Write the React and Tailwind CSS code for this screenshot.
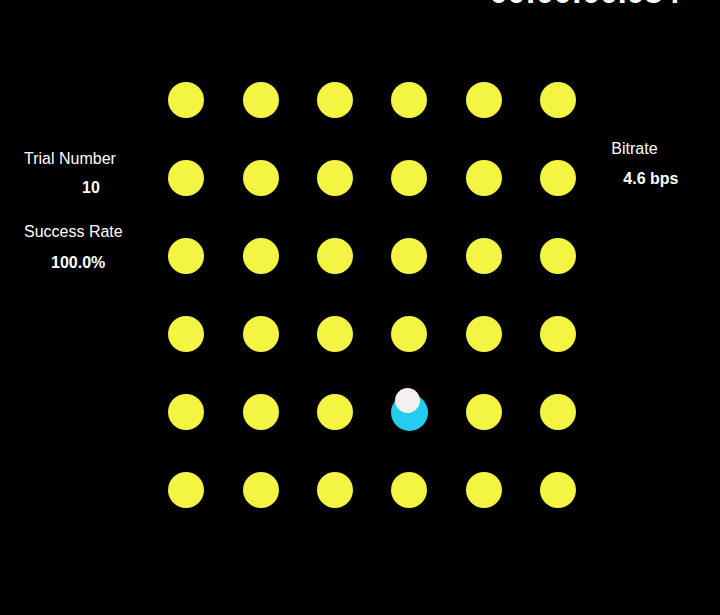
import React from "react";

const ROWS = 6;
const COLS = 6;
const TARGET = { row: 4, col: 3 };

const Dot = ({ active }) => {
  if (active) {
    return (
      <div className="relative flex items-center justify-center">
        <div className="w-[37px] h-[37px] rounded-full bg-[#22cdf0]" />
        <div className="absolute left-[23px] top-[15px] w-[25px] h-[25px] rounded-full bg-[#f5f0f0]" />
      </div>
    );
  }
  return (
    <div className="flex items-center justify-center">
      <div className="w-[36px] h-[36px] rounded-full bg-[#f4f443]" />
    </div>
  );
};

const App = () => {
  const cells = [];
  for (let r = 0; r < ROWS; r++) {
    for (let c = 0; c < COLS; c++) {
      cells.push(
        <Dot key={`${r}-${c}`} active={r === TARGET.row && c === TARGET.col} />
      );
    }
  }

  return (
    <div
      className="w-[720px] h-[615px] bg-black text-white overflow-hidden"
      style={{ fontFamily: '"Liberation Sans", Arial, sans-serif' }}
    >
      <div className="h-0 flex justify-end pr-[40px]">
        <div className="-mt-[24px] text-[32px] leading-[32px] font-bold">
          00:00:00.084
        </div>
      </div>

      <div className="flex">
        <div className="w-[149px] pt-[150px] pl-[24px] text-[16px] leading-[18px]">
          <div>Trial Number</div>
          <div className="mt-[11px] ml-[58px] font-bold">10</div>
          <div className="mt-[26px]">Success Rate</div>
          <div className="mt-[13px] ml-[27px] font-bold">100.0%</div>
        </div>

        <div className="pt-[61px]">
          <div className="grid grid-cols-[repeat(6,74.4px)] auto-rows-[78px]">
            {cells}
          </div>
        </div>

        <div className="pt-[140px] pl-[16px] text-[16px] leading-[18px]">
          <div>Bitrate</div>
          <div className="mt-[12px] ml-[12px] font-bold">4.6 bps</div>
        </div>
      </div>
    </div>
  );
};

export default App;
